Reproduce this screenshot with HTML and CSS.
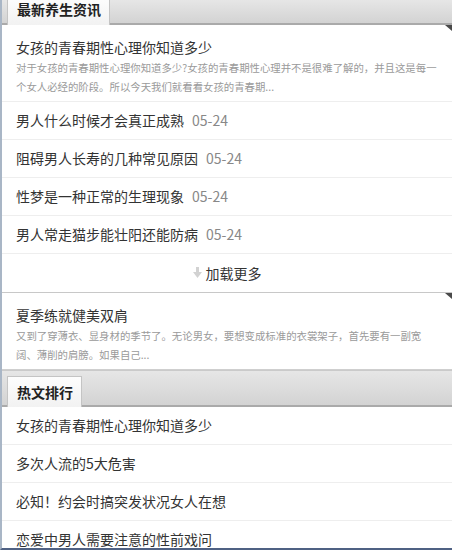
FILE: index.html
```html
<!DOCTYPE html>
<html lang="zh-CN">
<head>
    <meta charset="UTF-8">
    <meta name="viewport" content="width=device-width, initial-scale=1.0">
    <title>养生资讯</title>
    <link rel="stylesheet" href="styles.css">
</head>
<body>
    <div class="page">
        <div class="tab-bar tab-bar-top">
            <span class="tab">最新养生资讯</span>
        </div>

        <div class="news">
            <span class="corner"></span>
            <div class="news-item">
                <h3>女孩的青春期性心理你知道多少</h3>
                <p>对于女孩的青春期性心理你知道多少?女孩的青春期性心理并不是很难了解的，并且这是每一个女人必经的阶段。所以今天我们就看看女孩的青春期...</p>
            </div>
            <ul class="list">
                <li>男人什么时候才会真正成熟<span class="date">05-24</span></li>
                <li>阻碍男人长寿的几种常见原因<span class="date">05-24</span></li>
                <li>性梦是一种正常的生理现象<span class="date">05-24</span></li>
                <li>男人常走猫步能壮阳还能防病<span class="date">05-24</span></li>
            </ul>
            <div class="load-more">
                <svg class="arrow" width="9" height="12" viewBox="0 0 9 12">
                    <rect x="3" y="0" width="3" height="6" fill="#d2d2d2"/>
                    <polygon points="0,5 9,5 4.5,11" fill="#d2d2d2"/>
                </svg>
                加载更多
            </div>
        </div>

        <div class="news news-second">
            <span class="corner"></span>
            <div class="news-item">
                <h3>夏季练就健美双肩</h3>
                <p>又到了穿薄衣、显身材的季节了。无论男女，要想变成标准的衣裳架子，首先要有一副宽阔、薄削的肩膀。如果自己...</p>
            </div>
        </div>

        <div class="tab-bar">
            <span class="tab">热文排行</span>
        </div>
        <ul class="list">
            <li>女孩的青春期性心理你知道多少</li>
            <li>多次人流的5大危害</li>
            <li>必知！约会时搞突发状况女人在想</li>
            <li>恋爱中男人需要注意的性前戏问</li>
        </ul>
    </div>
</body>
</html>
```

FILE: styles.css
```css
body {
    margin: 0;
    padding: 0;
    background: #fff;
    font-family: "Noto Sans CJK SC", "Liberation Sans", sans-serif;
    color: #333;
}

.page {
    height: 550px;
    overflow: hidden;
    box-sizing: border-box;
    border-left: 2px solid #a9b6c6;
    border-bottom: 2px solid #4f6183;
}

/* tab bars */
.tab-bar {
    display: flex;
    align-items: flex-end;
    height: 37px;
    box-sizing: border-box;
    padding-left: 5px;
    background: linear-gradient(#e6e6e6, #d3d3d3);
    border-top: 1px solid #cacaca;
    border-bottom: 2px solid #aaa;
}

.tab-bar-top {
    height: 25px;
    border-top: none;
}

.tab {
    display: block;
    height: 31px;
    line-height: 31px;
    margin-bottom: -2px;
    padding: 0 8px 0 9px;
    font-size: 14px;
    font-weight: bold;
    color: #222;
    background: linear-gradient(#fdfdfd, #f2f2f2);
    border: 1px solid #c4c4c4;
    border-bottom: none;
    box-sizing: border-box;
}

.tab-bar-top .tab {
    height: 27px;
    line-height: 22px;
    border-top: none;
}

/* news blocks */
.news {
    position: relative;
}

.news-second {
    border-top: 1px solid #c8c8c8;
    border-bottom: 1px solid #cfcfcf;
}

.corner {
    position: absolute;
    top: 0;
    right: 0;
    width: 0;
    height: 0;
    border-top: 6px solid #4a4a4a;
    border-left: 7px solid transparent;
}

.news-item {
    padding: 11px 14px 5px 14px;
    border-bottom: 1px solid #eee;
}

.news-second .news-item {
    border-bottom: none;
    padding-bottom: 5px;
}

.news-item h3 {
    margin: 0;
    font-size: 14px;
    font-weight: normal;
    line-height: 22px;
    color: #333;
}

.news-item p {
    margin: 0;
    font-size: 10.4px;
    line-height: 19px;
    color: #9a9a9a;
}

.list {
    list-style: none;
    margin: 0;
    padding: 0;
}

.list li {
    height: 37px;
    line-height: 37px;
    padding-left: 14px;
    font-size: 14px;
    color: #333;
    border-bottom: 1px solid #eee;
    white-space: nowrap;
}

.date {
    margin-left: 8px;
    color: #888;
}

.load-more {
    display: flex;
    align-items: center;
    justify-content: center;
    gap: 4px;
    height: 38px;
    font-size: 14px;
    color: #333;
}
```
